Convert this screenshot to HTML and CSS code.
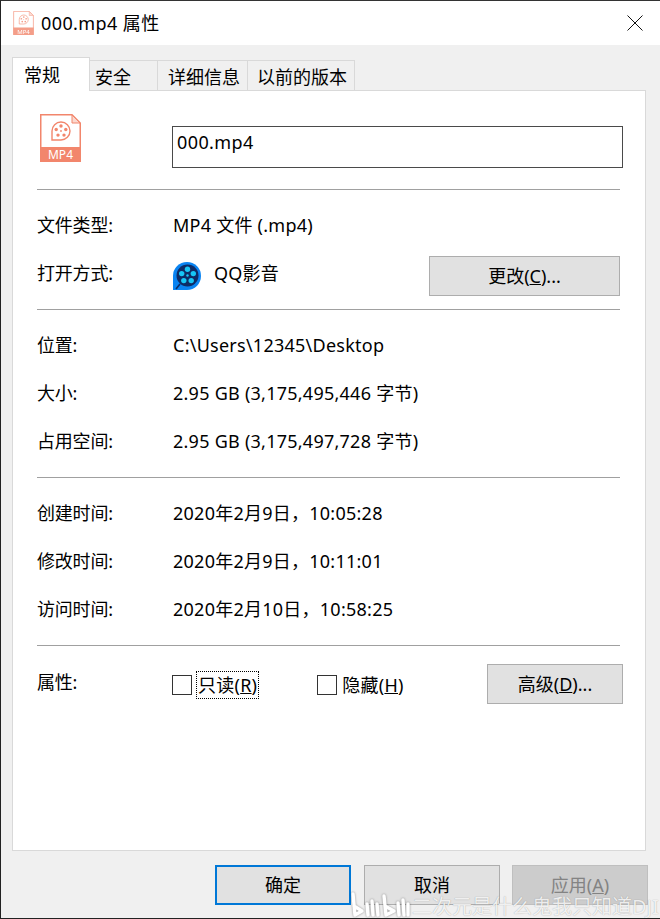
FILE: index.html
```html
<!DOCTYPE html>
<html lang="zh-CN">
<head>
<meta charset="utf-8">
<title>000.mp4 属性</title>
<link rel="stylesheet" href="styles.css">
</head>
<body>
<svg class="defs" width="0" height="0">
  <symbol id="mp4" viewBox="0 0 41 48">
    <path d="M.75.75H32L40.25 9V47.25H.75Z" fill="#fff" stroke="#f2866c" stroke-width="1.5"/>
    <path d="M32 1V9H40Z" fill="#fbd8cf" stroke="#f2866c" stroke-width="1"/>
    <rect y="33" width="41" height="15" fill="#f2866c"/>
    <text x="20.5" y="45" class="mp4-text">MP4</text>
    <path d="M12 26V17a9 9 0 1 1 9 9Z" fill="none" stroke="#f2866c" stroke-width="1.4"/>
    <g fill="#f2866c">
      <circle cx="21" cy="12" r="1.7"/><circle cx="25.8" cy="15.5" r="1.7"/><circle cx="24" cy="21.1" r="1.7"/>
      <circle cx="18" cy="21.1" r="1.7"/><circle cx="16.2" cy="15.5" r="1.7"/><circle cx="21" cy="17" r=".9"/>
    </g>
  </symbol>
</svg>

<div class="window">
  <header class="titlebar">
    <svg class="title-icon"><use href="#mp4"/></svg>
    <span class="title-text">000.mp4 属性</span>
    <svg class="close" viewBox="0 0 16 16"><path d="M.5.5 15.5 15.5M15.5.5.5 15.5" stroke="#111" stroke-width="1" fill="none"/></svg>
  </header>

  <div class="client">
    <nav class="tabs">
      <span class="tab tab-active">常规</span>
      <span class="tab tab-security">安全</span>
      <span class="tab tab-details">详细信息</span>
      <span class="tab tab-previous">以前的版本</span>
    </nav>

    <main class="panel">
      <section class="sec sec-name">
        <svg class="file-icon"><use href="#mp4"/></svg>
        <div class="name-input">000.mp4</div>
      </section>

      <section class="sec sec-type">
        <div class="row"><span class="label">文件类型:</span><span class="value">MP4 文件 (.mp4)</span></div>
        <div class="row row-open">
          <span class="label">打开方式:</span>
          <svg class="qq-icon" viewBox="0 0 30 30">
            <path d="M1 29V15a14 14 0 1 1 14 14Z" fill="#0a84f2"/>
            <circle cx="15.5" cy="14.5" r="11" fill="#0e2c66"/>
            <path d="M4 28 8 23" stroke="#0e2c66" stroke-width="1.6"/>
            <g fill="#17c6f6">
              <circle cx="15.5" cy="8.3" r="2.7"/><circle cx="21.3" cy="12.6" r="2.7"/><circle cx="19.2" cy="19.6" r="2.7"/>
              <circle cx="11.8" cy="19.6" r="2.7"/><circle cx="9.7" cy="12.6" r="2.7"/><circle cx="15.5" cy="14.5" r="1.2"/>
            </g>
          </svg>
          <span class="value app-name">QQ影音</span>
          <button class="btn btn-change">更改(<u>C</u>)...</button>
        </div>
      </section>

      <section class="sec sec-rows">
        <div class="row"><span class="label">位置:</span><span class="value">C:\Users\12345\Desktop</span></div>
        <div class="row"><span class="label">大小:</span><span class="value">2.95 GB (3,175,495,446 字节)</span></div>
        <div class="row"><span class="label">占用空间:</span><span class="value">2.95 GB (3,175,497,728 字节)</span></div>
      </section>

      <section class="sec sec-rows">
        <div class="row"><span class="label">创建时间:</span><span class="value">2020年2月9日，10:05:28</span></div>
        <div class="row"><span class="label">修改时间:</span><span class="value">2020年2月9日，10:11:01</span></div>
        <div class="row"><span class="label">访问时间:</span><span class="value">2020年2月10日，10:58:25</span></div>
      </section>

      <section class="sec-attrs">
        <span class="label label-attrs">属性:</span>
        <span class="check"></span>
        <span class="check-label focused">只读(<u>R</u>)</span>
        <span class="check check-second"></span>
        <span class="check-label">隐藏(<u>H</u>)</span>
        <button class="btn btn-advanced">高级(<u>D</u>)...</button>
      </section>
    </main>

    <footer class="actions">
      <button class="btn btn-action btn-default">确定</button>
      <button class="btn btn-action">取消</button>
      <button class="btn btn-action btn-disabled">应用(<u>A</u>)</button>
    </footer>
  </div>

  <div class="watermark">
    <svg class="bili" viewBox="0 0 60 26">
      <g fill="none" stroke="#fff" stroke-width="3.4" stroke-linecap="round" stroke-linejoin="round">
        <path d="M3 2 5 23 12 19 4 14"/>
        <path d="M17 12 18 23M22 9 23 23M27 12 28 23"/>
        <path d="M34 4 36 23 44 19 35 14"/>
        <path d="M48 11 49 23M53 8 54 23M58 12 58 23"/>
      </g>
    </svg>
    <span class="wm-text">二次元是什么鬼我只知道DJI</span>
  </div>
</div>
</body>
</html>
```

FILE: styles.css
```css
* { box-sizing: border-box; }

html, body {
  margin: 0;
  padding: 0;
  height: 100%;
  overflow: hidden;
}

body {
  font-family: "Noto Sans", "Noto Sans CJK SC", sans-serif;
  font-size: 18px;
  color: #000;
  background: #f0f0f0;
}

.defs { position: absolute; }

.mp4-text {
  font-family: "Noto Sans", sans-serif;
  font-size: 12px;
  fill: #fff;
  text-anchor: middle;
}

.window {
  position: relative;
  width: 660px;
  height: 919px;
  border-top: 1px solid #333;
  border-left: 1px solid #222;
  border-bottom: 1px solid #222;
  background: #f0f0f0;
  overflow: hidden;
}

.titlebar {
  display: flex;
  align-items: center;
  height: 44px;
  padding-left: 12px;
  background: #fff;
}

.title-icon {
  width: 21px;
  height: 24px;
  opacity: .8;
}

.title-text {
  margin-left: 7px;
  line-height: 24px;
  letter-spacing: .4px;
}

.close {
  width: 16px;
  height: 16px;
  margin-left: auto;
  margin-right: 17px;
}

.client {
  display: flex;
  flex-direction: column;
  padding-left: 11px;
}

.tabs {
  display: flex;
  align-items: flex-end;
  height: 45px;
}

.tab {
  position: relative;
  height: 30px;
  line-height: 33px;
  border: 1px solid #d9d9d9;
  border-left: 0;
  border-bottom: 0;
  white-space: nowrap;
}

.tab-active {
  z-index: 1;
  width: 78px;
  height: 34px;
  margin-bottom: -1px;
  padding-left: 11px;
  line-height: 34px;
  background: #fff;
  border-left: 1px solid #d9d9d9;
}

.tab-security { width: 68px; padding-left: 5px; }
.tab-details { width: 90px; padding-left: 10px; }
.tab-previous { width: 107px; padding-left: 9px; }

.panel {
  width: 634px;
  height: 761px;
  padding: 0 25px 0 24px;
  background: #fff;
  border: 1px solid #d9d9d9;
}

.sec { border-bottom: 1px solid #a0a0a0; }

.sec-name {
  display: flex;
  align-items: flex-start;
  height: 99px;
  padding: 23px 0 0 3px;
}

.file-icon {
  flex: none;
  width: 41px;
  height: 48px;
}

.name-input {
  flex: none;
  width: 451px;
  height: 42px;
  margin: 12px 0 0 91px;
  padding-left: 4px;
  line-height: 30px;
  letter-spacing: .4px;
  border: 1px solid #4a4a4a;
}

.sec-type { height: 120px; padding-top: 11px; }
.sec-rows { height: 168px; padding-top: 11px; }

.row {
  display: flex;
  align-items: center;
  height: 48px;
  line-height: 24px;
}

.label {
  flex: none;
  width: 136px;
  letter-spacing: -.2px;
}

.value { letter-spacing: .25px; }

.qq-icon {
  flex: none;
  width: 30px;
  height: 30px;
  margin: 6px 0 0 -1px;
}

.app-name { margin-left: 12px; }

.btn {
  font: inherit;
  color: #000;
  background: #e1e1e1;
  border: 1px solid #adadad;
  padding: 0;
  height: 40px;
  line-height: 36px;
}

.btn-change {
  width: 191px;
  margin: 6px 0 0 auto;
}

.sec-attrs {
  display: flex;
  align-items: flex-start;
  height: 204px;
  padding-top: 18px;
  margin-right: -3px;
  line-height: 24px;
}

.label-attrs { margin-top: 6px; }

.check {
  flex: none;
  width: 20px;
  height: 20px;
  margin-top: 11px;
  margin-left: -1px;
  border: 1px solid #333;
  background: #fff;
}

.check-label {
  margin-top: 8px;
  height: 26px;
  padding: 0 1px;
  margin-left: 4px;
  line-height: 27px;
  letter-spacing: .25px;
  white-space: nowrap;
}

.focused { margin-left: 5px; outline: 1px dotted #000; }

.check-second { margin-left: 59px; }

.btn-advanced {
  width: 136px;
  margin-left: auto;
}

.actions {
  display: flex;
  justify-content: flex-end;
  gap: 12px;
  padding: 14px 12px 0 0;
}

.btn-action { width: 136px; }

.btn-default {
  margin-right: 1px;
  border: 2px solid #0078d7;
}

.btn-disabled {
  color: #838383;
  background: #ccc;
  border-color: #bfbfbf;
}

.watermark {
  position: absolute;
  left: 349px;
  bottom: 0;
  display: flex;
  align-items: flex-end;
  white-space: nowrap;
}

.bili {
  width: 60px;
  height: 26px;
  filter: drop-shadow(0 0 1px rgba(0, 0, 0, .4));
}

.wm-text {
  margin-left: 2px;
  font-size: 20px;
  line-height: 22px;
  color: rgba(255, 255, 255, .85);
  text-shadow: 0 0 1px rgba(0, 0, 0, .35);
}
```
